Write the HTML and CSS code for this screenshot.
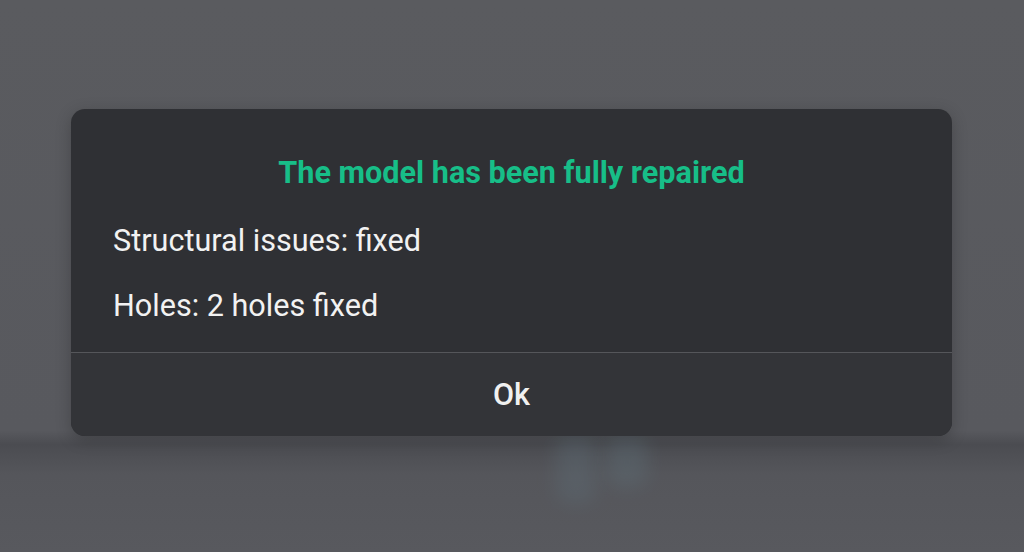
FILE: index.html
```html
<!DOCTYPE html>
<html lang="en">
<head>
<meta charset="utf-8">
<title>Repair result</title>
<link rel="stylesheet" href="styles.css">
</head>
<body>
<div class="backdrop">
  <div class="blob blob-a"></div>
  <div class="blob blob-b"></div>
  <div class="dialog">
    <div class="dialog-body">
      <h1 class="title">The model has been fully repaired</h1>
      <p class="line">Structural issues: fixed</p>
      <p class="line">Holes: 2 holes fixed</p>
    </div>
    <div class="dialog-actions">
      <button class="ok">Ok</button>
    </div>
  </div>
</div>
</body>
</html>
```

FILE: styles.css
```css
html, body {
  margin: 0;
  padding: 0;
  height: 100%;
}
body {
  background: #58595e;
  font-family: Roboto, "Noto Sans", sans-serif;
  overflow: hidden;
}
.backdrop {
  position: relative;
  height: 552px;
  padding-top: 109px;
  box-sizing: border-box;
  background: linear-gradient(180deg, #5a5b5f 0%, #58595e 78%, #4b4c51 80.5%, #55565b 86%, #58595e 100%);
}
.blob {
  position: absolute;
  filter: blur(9px);
  opacity: 0.35;
}
.blob-a {
  left: 556px;
  top: 432px;
  width: 40px;
  height: 72px;
  background: #5e6e78;
  border-radius: 14px;
}
.blob-b {
  left: 606px;
  top: 432px;
  width: 42px;
  height: 56px;
  background: #5f717a;
  border-radius: 16px;
}
.dialog {
  position: relative;
  margin-left: 71px;
  width: 881px;
  height: 327px;
  background: #2f3034;
  border-radius: 14px;
  box-shadow: 0 4px 16px rgba(0, 0, 0, 0.22);
  display: flex;
  flex-direction: column;
  overflow: hidden;
}
.dialog-body {
  padding: 46px 42px 0;
  height: 244px;
  box-sizing: border-box;
  border-bottom: 1px solid #55565a;
}
.title {
  margin: 0 0 32px;
  text-align: center;
  color: #17be88;
  font-size: 30.6px;
  font-weight: 700;
  line-height: 36px;
}
.line {
  margin: 0 0 29px;
  color: #f2f2f2;
  font-size: 30.6px;
  font-weight: 400;
  line-height: 36px;
}
.dialog-actions {
  flex: 1;
  display: flex;
  align-items: center;
  justify-content: center;
  background: #333438;
}
.ok {
  background: none;
  border: none;
  padding: 0;
  color: #f0f0f0;
  font-family: Roboto, "Noto Sans", sans-serif;
  font-size: 30.6px;
  font-weight: 500;
  line-height: 36px;
}
```
